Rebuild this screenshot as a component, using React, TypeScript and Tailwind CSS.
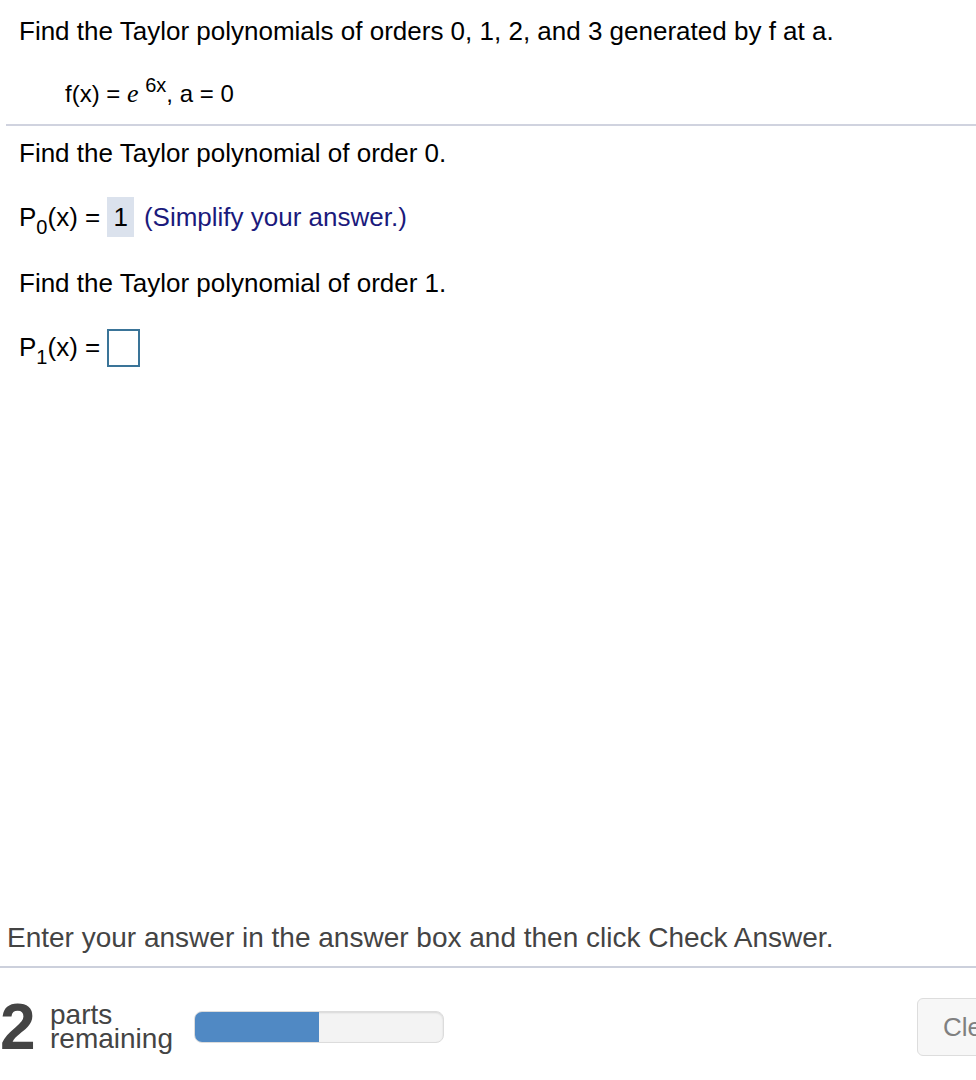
import React from 'react';

function Sub({ children }: { children: React.ReactNode }) {
  return <span className="relative top-[8px] text-[20px] leading-none">{children}</span>;
}

export default function App() {
  const parts = 2;
  const done = 0.5;

  return (
    <div className="h-[1080px] w-[976px] overflow-hidden bg-white flex flex-col font-['Liberation_Sans',Arial,sans-serif]">
      {/* question */}
      <div className="pl-[6px] text-black">
        <p className="pl-[13px] pt-[16px] text-[26px] leading-[30px]">
          Find the Taylor polynomials of orders 0, 1, 2, and 3 generated by f at a.
        </p>
        <p className="mt-[32px] pl-[59px] text-[24px] leading-[32px] whitespace-pre">
          f(x) = <span className="font-['Liberation_Serif',serif] italic text-[26px]">e</span>{' '}
          <span className="relative -top-[10px] text-[20px] leading-none">6x</span>, a = 0
        </p>
        <div className="mt-[14px] h-[2px] bg-[#d0d3df]" />

        <p className="mt-[12px] pl-[13px] text-[26px] leading-[30px]">Find the Taylor polynomial of order 0.</p>
        <p className="mt-[29px] pl-[13px] text-[26px] leading-[40px] whitespace-pre">
          P<Sub>0</Sub>(x) ={' '}
          <span className="inline-block h-[40px] bg-[#dbe2ed] px-[6px] leading-[40px]">1</span>
          <span className="ml-[10px] text-[#1b1a7c]">(Simplify your answer.)</span>
        </p>

        <p className="mt-[31px] pl-[13px] text-[26px] leading-[30px]">Find the Taylor polynomial of order 1.</p>
        <p className="mt-[29px] pl-[13px] text-[26px] leading-[40px] whitespace-pre">
          P<Sub>1</Sub>(x) = <span className="inline-block h-[38px] w-[33px] border-2 border-[#3a7498] bg-white align-[-11px]" />
        </p>
      </div>

      {/* footer */}
      <div className="mt-auto text-[#444]">
        <p className="pl-[7px] text-[28px] leading-[32px]">
          Enter your answer in the answer box and then click Check Answer.
        </p>
        <div className="mt-[12px] h-[2px] bg-[#ccd0dc]" />
        <div className="mt-[30px] mb-[24px] flex h-[58px] items-center">
          <span className="w-[36px] shrink-0 text-[64px] font-bold leading-[62px]">{parts}</span>
          <div className="ml-[14px] w-[144px] shrink-0 text-[28px] leading-[24px]">
            <div>parts</div>
            <div>remaining</div>
          </div>
          <div className="h-[32px] w-[250px] shrink-0 overflow-hidden rounded-[8px] border border-[#dcdcdc] bg-[#f3f3f3] shadow-[inset_0_1px_2px_rgba(0,0,0,0.12)]">
            <div className="h-full bg-[#5089c4]" style={{ width: `${done * 100}%` }} />
          </div>
          <button className="ml-[473px] h-[58px] shrink-0 whitespace-nowrap rounded-[6px] border border-[#dddddd] bg-[#f7f7f7] px-[25px] text-[26px] text-[#808080]">
            Clear All
          </button>
        </div>
      </div>
    </div>
  );
}
